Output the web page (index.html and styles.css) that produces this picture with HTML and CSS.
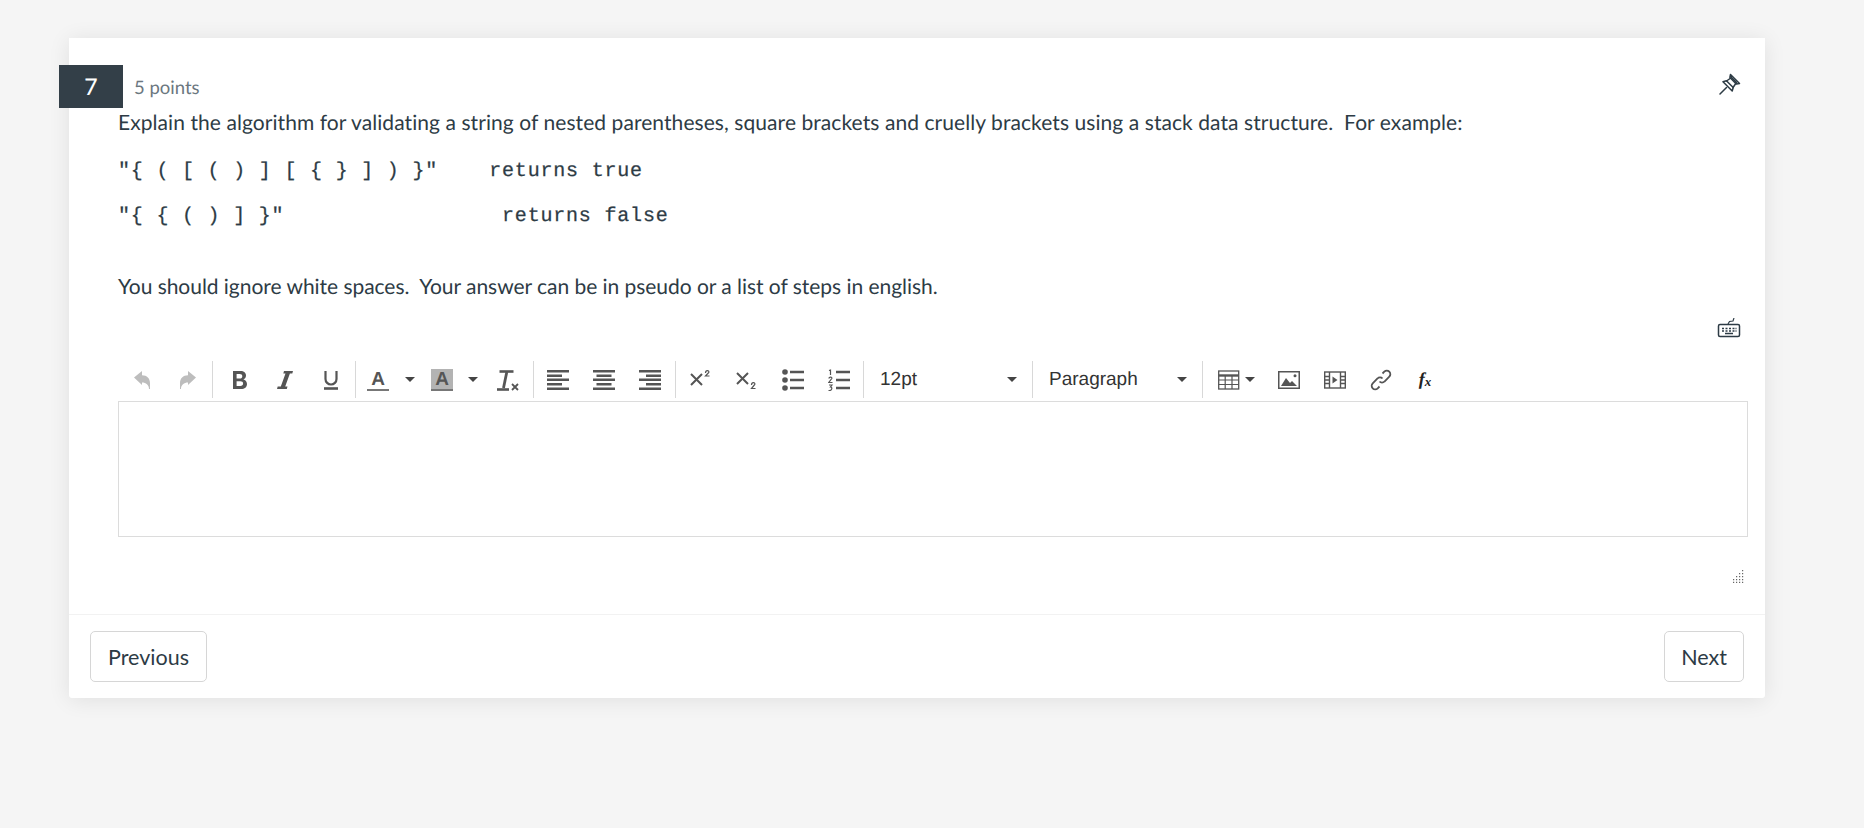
FILE: index.html
```html
<!DOCTYPE html>
<html lang="en">
<head>
<meta charset="utf-8">
<title>Question 7</title>
<link rel="stylesheet" href="styles.css">
</head>
<body>
<main class="card">
  <header class="q-head">
    <div class="q-num">7</div>
    <div class="q-points">5 points</div>
    <svg class="pin" width="22" height="22" viewBox="0 0 22 22" fill="none" stroke="#2d3b45" stroke-width="1.5" stroke-linejoin="round" stroke-linecap="round"><path d="M1 21l6.500-6.500"/><path d="M4 8.800l9.200 9.200 1-3.500-6.800-6.800z"/><path d="M7.500 8l5-3.500 5 5-3.500 5"/><path d="M11.500 1.500l9 9-3 .6-6.600-6.600z"/></svg>
  </header>
  <section class="q-body">
    <p class="q-text lead">Explain the algorithm for validating a string of nested parentheses, square brackets and cruelly brackets using a stack data structure.&nbsp; For example:</p>
    <p class="q-code first">"{ ( [ ( ) ] [ { } ] ) }"&nbsp;&nbsp;&nbsp; returns true</p>
    <p class="q-code">"{ { ( ) ] }"&nbsp;&nbsp;&nbsp;&nbsp;&nbsp;&nbsp;&nbsp;&nbsp;&nbsp;&nbsp;&nbsp;&nbsp;&nbsp;&nbsp;&nbsp;&nbsp; returns false</p>
    <p class="q-text note">You should ignore white spaces.&nbsp; Your answer can be in pseudo or a list of steps in english.</p>
    <div class="kbd-row">
      <svg width="24" height="20" viewBox="0 0 24 20" fill="none" stroke="#2d3b45"><rect x="1.500" y="6.500" width="21" height="12" rx="1.500" stroke-width="1.500"/><path d="M11 6l1.500-2.500 3.500-.5 1-3" stroke-width="1.200"/><path d="M5 10.500h2M8.500 10.500h2M12 10.500h2M15.500 10.500h2M18.500 10.500h1M5 13h2M8.500 13h2M12 13h2M15.500 13h2M18.500 13h1M8 15.500h8" stroke-width="1.500"/></svg>
    </div>
    <div class="toolbar">
      <div class="group g-first">
        <span class="tb"><svg width="16" height="20" viewBox="0 0 16 20" fill="#bdbdbd"><path d="M0 7.500L8 1v4.200c5 0 8 3 8 8V19h-1c0-4-3-6.500-7-6.500V15z"/></svg></span>
        <span class="tb"><svg width="16" height="20" viewBox="0 0 16 20" fill="#bdbdbd"><path d="M16 7.500L8 1v4.200c-5 0-8 3-8 8V19h1c0-4 3-6.500 7-6.500V15z"/></svg></span>
      </div>
      <div class="group g-text">
        <span class="tb"><svg width="15" height="20" viewBox="0 0 15 20" fill="#555"><path d="M1 1h7.500c3.500 0 5.500 1.800 5.500 4.600 0 1.900-1 3.300-2.600 3.900 2.100.5 3.600 2.200 3.600 4.500 0 3.100-2.300 5-6 5H1zm3.600 3v4.500h3.200c1.500 0 2.500-.9 2.500-2.300S9.300 4 7.800 4zm0 7.300V16h3.700c1.800 0 2.800-.9 2.800-2.400s-1-2.300-2.800-2.300z" fill-rule="evenodd"/></svg></span>
        <span class="tb"><svg width="16" height="20" viewBox="0 0 16 20" fill="#555"><path d="M7 1h9l-.7 2.500h-2.400L8.200 16.500h2.300L9.800 19H0l.7-2.500h3.100L8.500 3.500H6.300z"/></svg></span>
        <span class="tb"><svg width="16" height="20" viewBox="0 0 16 20" fill="none" stroke="#555"><path d="M2.500 1v8a5.500 5.500 0 0 0 11 0V1" stroke-width="2.200"/><path d="M1 18.500h14" stroke-width="2.600"/></svg></span>
      </div>
      <div class="group g-color">
        <span class="tb color"><span class="a-icon">A</span></span>
        <span class="caret-btn"><i class="caret"></i></span>
        <span class="tb color"><span class="a-icon hl">A</span></span>
        <span class="caret-btn small"><i class="caret"></i></span>
        <span class="tb"><svg width="22" height="22" viewBox="0 0 22 22" fill="none" stroke="#555"><path d="M2.500 2.500h14" stroke-width="2.600"/><path d="M9.800 3L6.500 19" stroke-width="2.800"/><path d="M0 20.500h12" stroke-width="2.600"/><path d="M15 15l6 6M21 15l-6 6" stroke-width="1.800"/></svg></span>
      </div>
      <div class="group g-align">
        <span class="tb"><svg width="22" height="20" viewBox="0 0 22 20" fill="#555"><path d="M0 0h22v2.500H0zM0 4.500h15v2.500H0zM0 8.500h22v2.500H0zM0 13h15v2.500H0zM0 17.500h22V20H0z"/></svg></span>
        <span class="tb"><svg width="22" height="20" viewBox="0 0 22 20" fill="#555"><path d="M0 0h22v2.500H0zM3.500 4.500h15v2.500h-15zM0 8.500h22v2.500H0zM3.500 13h15v2.500h-15zM0 17.500h22V20H0z"/></svg></span>
        <span class="tb"><svg width="22" height="20" viewBox="0 0 22 20" fill="#555"><path d="M0 0h22v2.500H0zM7 4.500h15v2.500H7zM0 8.500h22v2.500H0zM7 13h15v2.500H7zM0 17.500h22V20H0z"/></svg></span>
      </div>
      <div class="group g-lists">
        <span class="tb"><svg width="22" height="20" viewBox="0 0 22 20" fill="none" stroke="#555"><path d="M1 4l11 11M12 4L1 15" stroke-width="2"/><path d="M15.500 3c0-3 4-3 3.300-.5L15.500 6h4" stroke-width="1.200"/></svg></span>
        <span class="tb"><svg width="22" height="20" viewBox="0 0 22 20" fill="none" stroke="#555"><path d="M1 3l11 11M12 3L1 14" stroke-width="2"/><path d="M15.500 15c0-3 4-3 3.300-.5l-3.300 4h4" stroke-width="1.200"/></svg></span>
        <span class="tb"><svg width="22" height="22" viewBox="0 0 22 22" fill="#555"><circle cx="3" cy="3" r="2.800"/><circle cx="3" cy="11" r="2.800"/><circle cx="3" cy="19" r="2.800"/><path d="M8 1.800h14v2.500H8zM8 9.800h14v2.500H8zM8 17.800h14v2.500H8z"/></svg></span>
        <span class="tb"><svg width="22" height="22" viewBox="0 0 22 22" fill="none" stroke="#555"><path d="M8 3h14M8 11h14M8 19h14" stroke-width="2.500"/><path d="M1 1.500L2.500 1v5M.8 9.500c.5-2 3.700-1.500 3 0L.8 13.500h3.700M1 16h3l-1.500 2c2 0 2 4-2 3.500" stroke-width="1.200"/></svg></span>
      </div>
      <div class="select"><span>12pt</span><i class="caret"></i></div>
      <div class="select s-para"><span>Paragraph</span><i class="caret"></i></div>
      <div class="group g-insert">
        <span class="tb table"><svg width="22" height="20" viewBox="0 0 22 20" fill="none" stroke="#555"><rect x=".7" y="1" width="20" height="18" stroke-width="1.300"/><path d="M.5 5.500h20" stroke-width="2.400"/><path d="M.5 10h20M.5 14.500h20M7.200 5v14M14 5v14" stroke-width="1.200"/></svg><i class="caret"></i></span>
        <span class="tb"><svg width="22" height="18" viewBox="0 0 22 18" fill="#555"><path d="M0 0h22v18H0zM1.500 1.500v15h19v-15z" fill-rule="evenodd"/><path d="M3 15l5-8 4 5 2-2 5 5z"/><circle cx="17" cy="4.800" r="1.500"/></svg></span>
        <span class="tb"><svg width="22" height="18" viewBox="0 0 22 18" fill="none" stroke="#555"><rect x=".7" y="1" width="20.600" height="16" stroke-width="1.400"/><path d="M5.500 1v16M16.500 1v16" stroke-width="1.400"/><path d="M.7 5.500h4.800M.7 9h4.800M.7 12.500h4.800M16.500 5.500h4.800M16.500 9h4.800M16.500 12.500h4.800" stroke-width="1.400"/><path d="M8.500 5.500l5 3.500-5 3.500z" fill="#555" stroke="none"/></svg></span>
        <span class="tb"><svg width="22" height="22" viewBox="0 0 22 22" fill="none" stroke="#555" stroke-width="1.800"><path d="M9.500 12.500a3.400 3.400 0 0 0 5 0l4.800-4.800a3.500 3.500 0 0 0-5-5L12.500 4.500"/><path d="M12.500 9.500a3.400 3.400 0 0 0-5 0l-4.800 4.800a3.500 3.500 0 0 0 5 5l1.800-1.800"/></svg></span>
        <span class="tb fx"><span>f</span><span class="x">x</span></span>
      </div>
    </div>
    <div class="editor"></div>
    <div class="resize-row">
      <svg width="12" height="13" viewBox="0 0 12 13" fill="#666"><path d="M10 0h1.200v1.200H10zM10 3h1.200v1.200H10zM7 3h1.200v1.200H7zM10 6h1.200v1.200H10zM7 6h1.200v1.200H7zM4 6h1.200v1.200H4zM10 9h1.200v1.200H10zM7 9h1.200v1.200H7zM4 9h1.200v1.200H4zM1 9h1.200v1.200H1zM10 11.800h1.200V13H10zM7 11.800h1.200V13H7zM4 11.800h1.200V13H4zM1 11.800h1.200V13H1z"/></svg>
    </div>
  </section>
  <footer class="q-foot">
    <button class="btn" type="button">Previous</button>
    <button class="btn btn-next" type="button">Next</button>
  </footer>
</main>
</body>
</html>
```
FILE: styles.css
```css
* { box-sizing: border-box; }
html, body { height: 100%; }
body {
  margin: 0;
  background: #f5f5f5;
  color: #2d3b45;
  font-family: "Lato", sans-serif;
  text-rendering: geometricPrecision;
  overflow: hidden;
}
.card {
  width: 1696px;
  height: 660px;
  margin: 38px 0 0 69px;
  padding-top: 27px;
  background: #fff;
  border-radius: 0 0 3px 3px;
  box-shadow: 0 2px 22px rgba(0, 0, 0, .09);
  display: flex;
  flex-direction: column;
}
.q-head {
  display: flex;
  align-items: center;
  height: 43px;
  margin-left: -10px;
  padding-right: 24px;
}
.q-num {
  width: 64px;
  height: 43px;
  background: #333f48;
  color: #fff;
  font-size: 23px;
  font-weight: 500;
  line-height: 43px;
  text-align: center;
}
.q-points {
  margin-left: 11px;
  font-size: 18.500px;
  color: #6b7780;
}
.pin { margin: -6px 0 0 auto; }
.q-body { padding: 0 17px 0 49px; flex: 1; }
.q-text {
  margin: 0;
  font-size: 21px;
  line-height: 28px;
}
.lead { margin-top: 1px; letter-spacing: .07px; }
.q-code {
  margin: 13px 0 0;
  font-family: "Liberation Mono", monospace;
  font-size: 20px;
  letter-spacing: .8px;
  line-height: 32px;
  -webkit-text-stroke: .25px #2d3b45;
}
.q-code.first { margin-top: 19px; }
.note { margin-top: 40px; letter-spacing: -.04px; }
.kbd-row {
  display: flex;
  justify-content: flex-end;
  height: 24px;
  margin-top: 17px;
  padding-right: 7px;
}
.toolbar {
  display: flex;
  align-items: center;
  height: 37px;
  margin-top: 19px;
  margin-bottom: 3px;
}
.group {
  display: flex;
  height: 37px;
  border-right: 1px solid #d8d8d8;
}
.g-first { padding: 0 1px; }
.g-text { padding: 0 1px 0 3px; }
.g-color { padding: 0 2px 0 4px; }
.g-align { padding: 0 2px 0 1px; }
.g-lists { padding: 0 1px 0 2px; }
.g-insert { border-right: 0; }
.tb {
  width: 46px;
  height: 37px;
  display: flex;
  align-items: center;
  justify-content: center;
}
.tb.color { width: 36px; }
.caret-btn {
  width: 28px;
  display: flex;
  align-items: center;
  justify-content: center;
}
.caret-btn.small { width: 25px; }
.caret {
  display: block;
  width: 0;
  height: 0;
  border-left: 5px solid transparent;
  border-right: 5px solid transparent;
  border-top: 5px solid #444;
}
.a-icon {
  display: block;
  width: 22px;
  height: 22px;
  border-bottom: 2px solid #777;
  font-family: "Liberation Sans", sans-serif;
  font-size: 19px;
  font-weight: 700;
  line-height: 22px;
  text-align: center;
  color: #555;
}
.a-icon.hl { background: #b3b3b3; }
.select {
  width: 169px;
  height: 37px;
  padding: 0 15px 0 16px;
  border-right: 1px solid #d8d8d8;
  display: flex;
  align-items: center;
  justify-content: space-between;
  font-family: "Liberation Sans", sans-serif;
  font-size: 19px;
  color: #333;
}
.s-para { width: 170px; }
.tb.table {
  width: 63px;
  justify-content: flex-start;
  padding-left: 15px;
  gap: 5px;
}
.fx {
  padding-right: 4px;
  font-family: "Liberation Serif", serif;
  font-style: italic;
  font-weight: 700;
  font-size: 18px;
  color: #222;
}
.fx .x { font-size: 13px; padding-top: 4px; }
.editor {
  height: 136px;
  border: 1px solid #dcdcdc;
}
.resize-row {
  display: flex;
  justify-content: flex-end;
  margin-top: 33px;
  padding-right: 4px;
}
.q-foot {
  display: flex;
  align-items: center;
  justify-content: space-between;
  height: 84px;
  padding: 0 21px;
  border-top: 1px solid #f2f2f2;
}
.btn {
  height: 51px;
  padding: 0 17px;
  background: #fff;
  border: 1px solid #d6d6d6;
  border-radius: 5px;
  font-family: "Lato", sans-serif;
  font-size: 21.500px;
  color: #2d3b45;
}
.btn-next { padding: 0 16px; }
```
